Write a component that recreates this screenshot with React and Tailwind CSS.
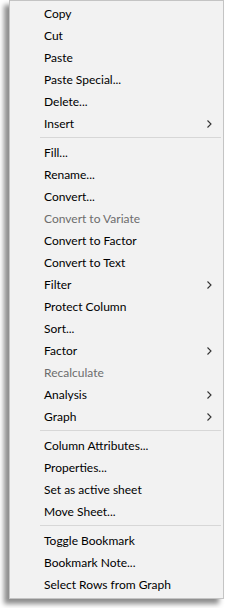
import React from "react";

const groups = [
  [
    { t: "Copy" },
    { t: "Cut" },
    { t: "Paste" },
    { t: "Paste Special..." },
    { t: "Delete..." },
    { t: "Insert", sub: true },
  ],
  [
    { t: "Fill..." },
    { t: "Rename..." },
    { t: "Convert..." },
    { t: "Convert to Variate", dis: true },
    { t: "Convert to Factor" },
    { t: "Convert to Text" },
    { t: "Filter", sub: true },
    { t: "Protect Column" },
    { t: "Sort..." },
    { t: "Factor", sub: true },
    { t: "Recalculate", dis: true },
    { t: "Analysis", sub: true },
    { t: "Graph", sub: true },
  ],
  [
    { t: "Column Attributes..." },
    { t: "Properties..." },
    { t: "Set as active sheet" },
    { t: "Move Sheet..." },
  ],
  [
    { t: "Toggle Bookmark" },
    { t: "Bookmark Note..." },
    { t: "Select Rows from Graph" },
  ],
];

function Chevron() {
  return (
    <svg width="5" height="8" viewBox="0 0 5 8" className="block">
      <polyline points="0.5,0.5 4,4 0.5,7.5" fill="none" stroke="#333" strokeWidth="1.1" />
    </svg>
  );
}

export default function App() {
  return (
    <div className="w-[225px] h-[608px] bg-white pl-[9px]">
      <div
        className="w-[215px] h-[599px] bg-[#f2f2f2] border border-[#c4c4c4] py-[2px] pr-[2px] shadow-[-5px_5px_5px_rgba(0,0,0,0.45)] text-[12px] leading-[16px] text-black"
        style={{ fontFamily: 'Lato, "Liberation Sans", sans-serif' }}
      >
        {groups.map((g, gi) => (
          <div key={gi}>
            {gi > 0 && (
              <div className="pt-[2px] pb-[4px] pl-[30px]">
                <div className="h-px bg-[#d7d7d7]" />
              </div>
            )}
            {g.map((it) => (
              <div key={it.t} className="h-[22px] flex items-center pl-[34px] pr-[9px]">
                <span className={"flex-1 " + (it.dis ? "text-[#6d6d6d]" : "")}>{it.t}</span>
                {it.sub && <Chevron />}
              </div>
            ))}
          </div>
        ))}
      </div>
    </div>
  );
}
